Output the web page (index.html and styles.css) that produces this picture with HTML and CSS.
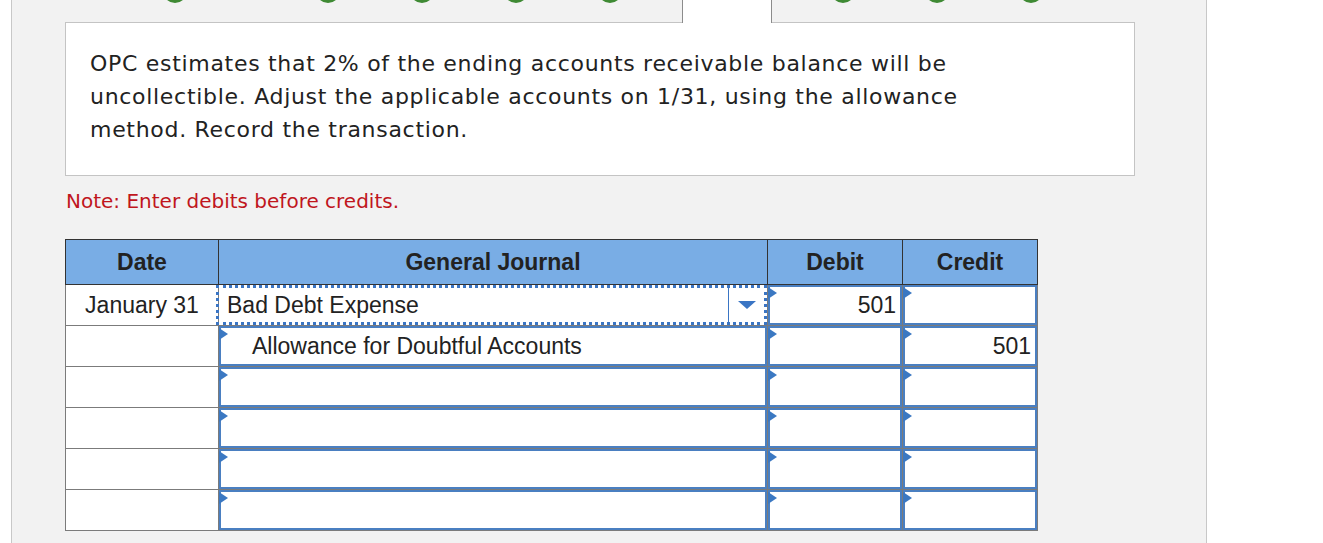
FILE: index.html
```html
<!DOCTYPE html>
<html lang="en">
  <head>
    <meta charset="UTF-8" />
    <meta name="viewport" content="width=device-width, initial-scale=1.0" />
    <title>Journal Entry</title>
    <link rel="stylesheet" href="styles.css">
  </head>
  <body>
    <div class="panel">
      <!-- Question tabs -->
      <div class="steps">
        <span class="step step-first"><i class="dot"></i></span>
        <span class="step"><i class="dot"></i></span>
        <span class="step"><i class="dot"></i></span>
        <span class="step"><i class="dot"></i></span>
        <span class="step"><i class="dot"></i></span>
        <span class="step-current"></span>
        <span class="step"><i class="dot"></i></span>
        <span class="step"><i class="dot"></i></span>
        <span class="step"><i class="dot"></i></span>
      </div>

      <!-- Question text -->
      <div class="question">
        <p>OPC estimates that 2% of the ending accounts receivable balance will be uncollectible. Adjust the applicable accounts on 1/31, using the allowance method. Record the transaction.</p>
      </div>

      <p class="note">Note: Enter debits before credits.</p>

      <!-- Journal Table -->
      <table class="journal">
        <colgroup>
          <col class="col-date" />
          <col class="col-account" />
          <col class="col-amount" />
          <col class="col-amount" />
        </colgroup>
        <thead>
          <tr>
            <th>Date</th>
            <th>General Journal</th>
            <th>Debit</th>
            <th>Credit</th>
          </tr>
        </thead>
        <tbody>
          <tr>
            <td class="date">January 31</td>
            <td class="entry">
              <div class="select">
                <span class="select-text">Bad Debt Expense</span>
                <span class="select-arrow"></span>
              </div>
            </td>
            <td class="entry"><div class="field amount">501</div></td>
            <td class="entry"><div class="field amount"></div></td>
          </tr>
          <tr>
            <td class="date"></td>
            <td class="entry"><div class="field indent">Allowance for Doubtful Accounts</div></td>
            <td class="entry"><div class="field amount"></div></td>
            <td class="entry"><div class="field amount">501</div></td>
          </tr>
          <tr>
            <td class="date"></td>
            <td class="entry"><div class="field"></div></td>
            <td class="entry"><div class="field amount"></div></td>
            <td class="entry"><div class="field amount"></div></td>
          </tr>
          <tr>
            <td class="date"></td>
            <td class="entry"><div class="field"></div></td>
            <td class="entry"><div class="field amount"></div></td>
            <td class="entry"><div class="field amount"></div></td>
          </tr>
          <tr>
            <td class="date"></td>
            <td class="entry"><div class="field"></div></td>
            <td class="entry"><div class="field amount"></div></td>
            <td class="entry"><div class="field amount"></div></td>
          </tr>
          <tr>
            <td class="date"></td>
            <td class="entry"><div class="field"></div></td>
            <td class="entry"><div class="field amount"></div></td>
            <td class="entry"><div class="field amount"></div></td>
          </tr>
        </tbody>
      </table>
    </div>
  </body>
</html>
```

FILE: styles.css
```css
body {
  margin: 0;
  background-color: #ffffff;
  color: #222222;
}
.panel {
  width: 1194px;
  min-height: 100vh;
  margin-left: 11px;
  background-color: #f2f2f2;
  border-left: 1px solid #c8c8c8;
  border-right: 1px solid #c8c8c8;
  overflow: hidden;
}
.steps {
  display: flex;
  align-items: flex-end;
  height: 22px;
  padding-left: 116px;
}
.step {
  display: flex;
  justify-content: center;
  align-items: flex-end;
  width: 94px;
  height: 22px;
}
.step-first {
  margin-right: 59px;
}
.dot {
  flex: none;
  width: 24px;
  height: 24px;
  margin-bottom: 19px;
  box-sizing: border-box;
  border: 3px solid #3f8a34;
  border-radius: 50%;
  background-color: #f2f2f2;
}
.step-current {
  position: relative;
  z-index: 1;
  width: 90px;
  height: 23px;
  margin: 0 24px -1px 25px;
  box-sizing: border-box;
  background-color: #ffffff;
  border-left: 1px solid #8c8c8c;
  border-right: 1px solid #8c8c8c;
}
.question {
  width: 1070px;
  margin-left: 53px;
  box-sizing: border-box;
  padding: 24px 24px 29px;
  background-color: #ffffff;
  border: 1px solid #c4c4c4;
}
.question p {
  max-width: 900px;
  margin: 0;
  font-family: "DejaVu Sans", sans-serif;
  font-size: 22px;
  letter-spacing: 0.7px;
  line-height: 33px;
}
.note {
  margin: 13px 0 26px 54px;
  font-family: "DejaVu Sans", sans-serif;
  font-size: 20px;
  line-height: 24px;
  color: #c0161d;
}
.journal {
  margin-left: 53px;
  width: 973px;
  table-layout: fixed;
  border-collapse: collapse;
  font-family: "Liberation Sans", Arial, sans-serif;
  font-size: 23px;
}
.col-date {
  width: 153px;
}
.col-account {
  width: 549px;
}
.col-amount {
  width: 135px;
}
.journal th {
  height: 44px;
  padding: 0;
  background-color: #79ade5;
  border: 1px solid #333333;
  font-weight: bold;
}
.journal td {
  padding: 0;
  background-color: #ffffff;
  border: 1px solid #7b7b7b;
}
.journal td.date {
  text-align: center;
}
.field {
  position: relative;
  height: 40px;
  box-sizing: border-box;
  padding: 0 8px;
  border: 2px solid #4a7fc1;
  line-height: 36px;
  white-space: nowrap;
}
.field::before {
  content: "";
  position: absolute;
  top: 0;
  left: -2px;
  border-top: 6px solid transparent;
  border-bottom: 6px solid transparent;
  border-left: 9px solid #3b78c2;
}
.field.amount {
  padding-right: 4px;
  text-align: right;
}
.field.indent {
  padding-left: 31px;
}
.select {
  display: flex;
  align-items: center;
  height: 34px;
  margin: 3px 3px 3px 0;
  outline: 3px dotted #3a75c4;
}
.select-text {
  flex: 1;
  padding-left: 8px;
}
.select-arrow {
  display: flex;
  justify-content: center;
  align-items: center;
  width: 35px;
  height: 34px;
  border-left: 1px solid #3a75c4;
}
.select-arrow::after {
  content: "";
  border-left: 9px solid transparent;
  border-right: 9px solid transparent;
  border-top: 8px solid #3a75c4;
}
```
